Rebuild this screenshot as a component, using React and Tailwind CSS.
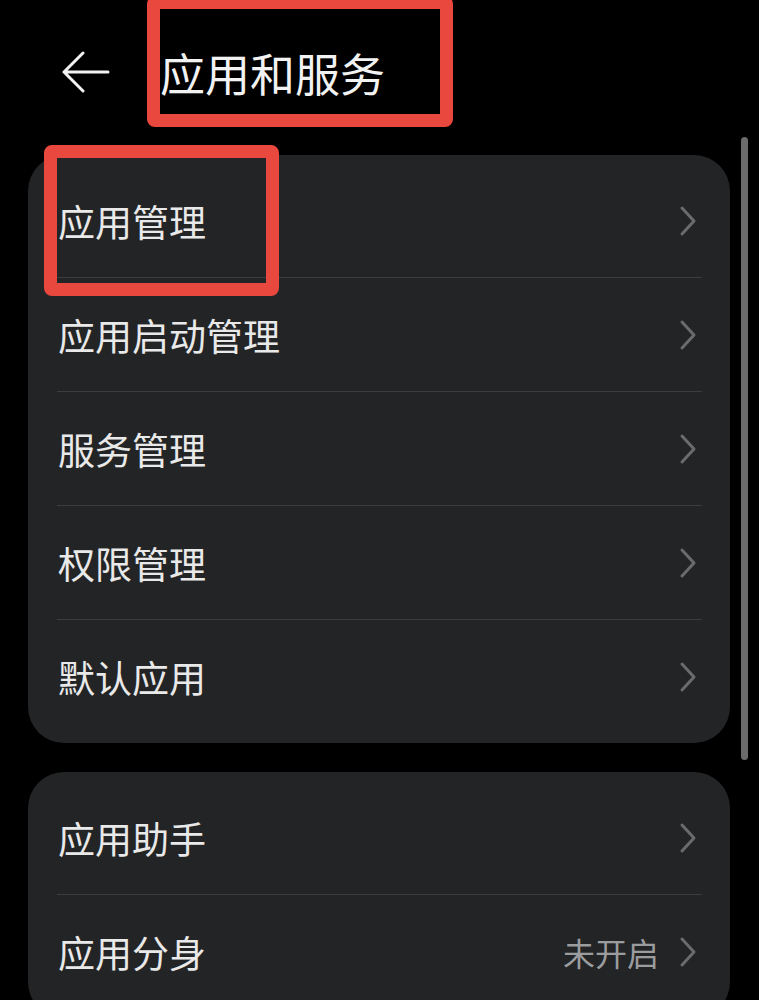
import React from 'react'

const font = { fontFamily: '"Noto Sans CJK SC", "Noto Sans", sans-serif' }

const Chevron = () => (
    <svg width="18" height="32" viewBox="0 0 18 32" fill="none" className="shrink-0">
        <polyline points="3,3 15,16 3,29" stroke="#6a6b6d" strokeWidth="3" strokeLinecap="round" strokeLinejoin="round" />
    </svg>
)

const Row = ({ label, value, last }) => (
    <div className="relative h-[114px] flex items-center pl-[30px] pr-[33px]">
        <span className="flex-1 text-[37px] text-[#e9e9e9] leading-none">{label}</span>
        {value && <span className="text-[32px] text-[#9b9c9e] leading-none mr-[20px]">{value}</span>}
        <Chevron />
        {!last && <div className="absolute bottom-0 left-[29px] right-[28px] h-px bg-[#3c3d3f]" />}
    </div>
)

const Card = ({ items }) => (
    <div className="ml-[28px] w-[702px] bg-[#232426] rounded-[36px] py-[9px]">
        {items.map((item, i) => (
            <Row key={item.label} label={item.label} value={item.value} last={i === items.length - 1} />
        ))}
    </div>
)

export default function App() {
    return (
        <div className="relative w-[759px] h-[1000px] overflow-hidden bg-black" style={font}>
            {/* Header */}
            <div className="h-[144px] flex items-center pl-[62px]">
                <svg width="48" height="44" viewBox="0 0 48 44" fill="none" className="shrink-0">
                    <path d="M2 22 H46 M2 22 L21 3 M2 22 L21 41" stroke="#f2f2f2" strokeWidth="3" strokeLinecap="round" strokeLinejoin="round" />
                </svg>
                <h1 className="ml-[50px] text-[45px] text-[#f2f2f2] font-normal leading-none">应用和服务</h1>
            </div>

            <div className="pt-[11px] flex flex-col gap-[29px]">
                <Card items={[
                    { label: '应用管理' },
                    { label: '应用启动管理' },
                    { label: '服务管理' },
                    { label: '权限管理' },
                    { label: '默认应用' },
                ]} />
                <Card items={[
                    { label: '应用助手' },
                    { label: '应用分身', value: '未开启' },
                ]} />
            </div>

            {/* Scrollbar */}
            <div className="absolute left-[741px] top-[137px] w-[7px] h-[623px] rounded-full bg-[#6b6b6b]" />

            {/* Red annotation boxes */}
            <div className="absolute left-[147px] top-[-4px] w-[306px] h-[131px] border-[13px] border-[#e8483d] rounded-[8px]" />
            <div className="absolute left-[44px] top-[145px] w-[235px] h-[151px] border-[13px] border-[#e8483d] rounded-[8px]" />
        </div>
    )
}
